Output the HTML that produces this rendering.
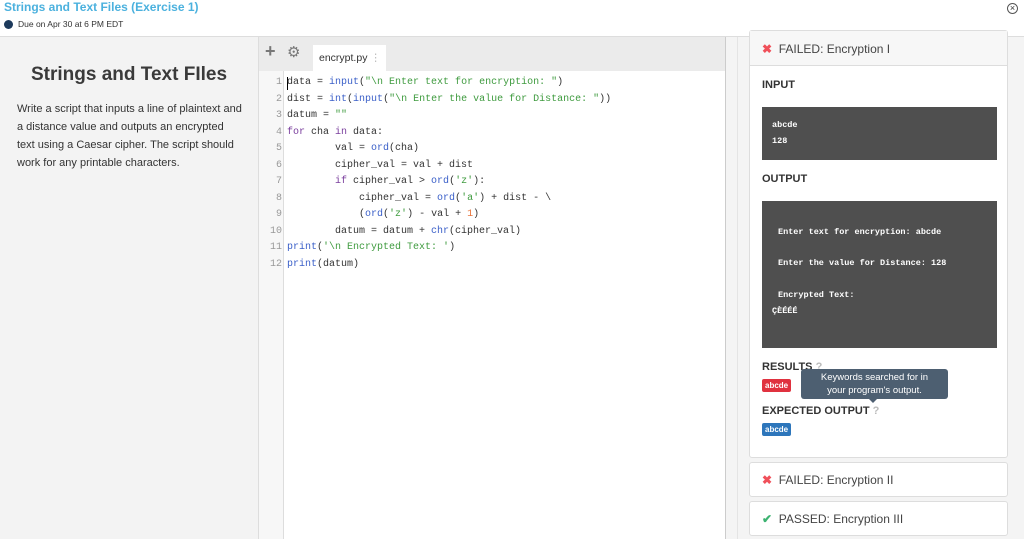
<!DOCTYPE html>
<html><head><style>
*{margin:0;padding:0;box-sizing:border-box}
body{width:1024px;height:539px;overflow:hidden;background:#fff;font-family:"Liberation Sans",sans-serif;position:relative;color:#333}
.abs{position:absolute}
.code{font-family:"Liberation Mono",monospace;font-size:10px;color:#333;white-space:pre;line-height:16.5px}
.k{color:#7a3e9d}.f{color:#3a5fc8}.s{color:#3f9b3f}.n{color:#e8743b}
.card{position:absolute;left:749px;width:259px;background:#fff;border:1px solid #ddd;border-radius:3px}
.lbl{position:absolute;left:12px;font-size:11px;font-weight:bold;color:#333}
.dark{position:absolute;left:12px;width:235px;background:#4f4f4f;color:#fff;font-family:"Liberation Mono",monospace;font-size:8.5px;font-weight:bold;white-space:pre}
.badge{position:absolute;font-size:8px;font-weight:bold;color:#fff;padding:2px 3px;border-radius:2px}
.hdr{position:absolute;left:12px;font-size:12px;color:#444}
</style></head><body>
<div class="abs" style="left:4px;top:0px;font-size:12px;font-weight:bold;color:#4bb1de">Strings and Text Files (Exercise 1)</div>
<div class="abs" style="left:4px;top:20px;width:9px;height:9px;border-radius:50%;background:#1d3a5c"></div>
<div class="abs" style="left:18px;top:19px;font-size:8.5px;color:#333">Due on Apr 30 at 6 PM EDT</div>
<div class="abs" style="right:6px;top:3px;width:11px;height:11px;border:1px solid #555;border-radius:50%;font-size:9px;line-height:9px;text-align:center">×</div>
<div class="abs" style="left:0;top:36px;width:1024px;height:1px;background:#ddd"></div>

<div class="abs" style="left:0;top:37px;width:258px;height:502px;background:#f3f3f3"></div>
<div class="abs" style="left:0;top:64px;width:258px;text-align:center;font-size:19px;font-weight:bold;color:#3a3a3a">Strings and Text FIles</div>
<div class="abs" style="left:17px;top:100px;width:226px;font-size:11px;line-height:18px;color:#333">Write a script that inputs a line of plaintext and a distance value and outputs an encrypted text using a Caesar cipher. The script should work for any printable characters.</div>

<div class="abs" style="left:258px;top:37px;width:468px;height:502px;background:#fff;border-left:1px solid #ddd;border-right:1px solid #ccc"></div>
<div class="abs" style="left:259px;top:37px;width:466px;height:34px;background:#ebebeb"></div>
<div class="abs" style="left:265px;top:41px;font-size:18px;font-weight:bold;color:#777">+</div>
<div class="abs" style="left:287px;top:43px;font-size:15px;color:#777">⚙</div>
<div class="abs" style="left:313px;top:45px;width:73px;height:26px;background:#fff"></div>
<div class="abs" style="left:319px;top:52px;font-size:10.5px;color:#333">encrypt.py <span style="color:#bbb">⋮</span></div>
<div class="abs" style="left:259px;top:71px;width:25px;height:468px;background:#f7f7f7;border-right:1px solid #ddd"></div>
<div class="abs code" style="left:260px;top:75px;width:22px;text-align:right;color:#999">1
2
3
4
5
6
7
8
9
10
11
12</div>
<div class="abs" style="left:287px;top:77px;width:1px;height:13px;background:#000"></div>
<div class="abs code" style="left:287px;top:75px">data = <span class="f">input</span>(<span class="s">"\n Enter text for encryption: "</span>)
dist = <span class="f">int</span>(<span class="f">input</span>(<span class="s">"\n Enter the value for Distance: "</span>))
datum = <span class="s">""</span>
<span class="k">for</span> cha <span class="k">in</span> data:
        val = <span class="f">ord</span>(cha)
        cipher_val = val + dist
        <span class="k">if</span> cipher_val > <span class="f">ord</span>(<span class="s">'z'</span>):
            cipher_val = <span class="f">ord</span>(<span class="s">'a'</span>) + dist - \
            (<span class="f">ord</span>(<span class="s">'z'</span>) - val + <span class="n">1</span>)
        datum = datum + <span class="f">chr</span>(cipher_val)
<span class="f">print</span>(<span class="s">'\n Encrypted Text: '</span>)
<span class="f">print</span>(datum)</div>

<div class="abs" style="left:726px;top:37px;width:298px;height:502px;background:#f4f4f4"></div>
<div class="abs" style="left:737px;top:37px;width:1px;height:502px;background:#e4e4e4"></div>

<div class="card" style="top:30px;height:428px">
 <div class="abs" style="left:0;top:0;width:257px;height:35px;background:#f7f7f7;border-bottom:1px solid #ddd"></div>
 <div class="hdr" style="top:11px"><span style="color:#f0505a;font-weight:bold">✖</span>&nbsp; FAILED: Encryption I</div>
 <div class="lbl" style="top:48px">INPUT</div>
 <div class="dark" style="top:76px;height:53px;padding:10px 10px;line-height:16px">abcde
128</div>
 <div class="lbl" style="top:142px">OUTPUT</div>
 <div class="dark" style="top:170px;height:147px;padding:24px 16px;line-height:15.7px"><span>Enter text for encryption: abcde</span>

Enter the value for Distance: 128

Encrypted Text:
<span style="margin-left:-6px">ÇÈÉÉÉ</span></div>
 <div class="lbl" style="top:330px">RESULTS <span style="color:#bbb">?</span></div>
 <div class="badge" style="left:12px;top:348px;background:#e0323f">abcde</div>
 <div class="abs" style="left:51px;top:338px;width:147px;height:30px;background:#4d5f71;border-radius:3px;color:#fff;font-size:9.5px;text-align:center;line-height:13px;padding-top:2px">Keywords searched for in<br>your program's output.</div>
 <div class="abs" style="left:119px;top:368px;border:4px solid transparent;border-top-color:#4d5f71"></div>
 <div class="lbl" style="top:374px">EXPECTED OUTPUT <span style="color:#bbb">?</span></div>
 <div class="badge" style="left:12px;top:392px;background:#2d76bb">abcde</div>
</div>
<div class="card" style="top:462px;height:35px"><div class="hdr" style="top:10px"><span style="color:#f0505a;font-weight:bold">✖</span>&nbsp; FAILED: Encryption II</div></div>
<div class="card" style="top:501px;height:35px"><div class="hdr" style="top:10px"><span style="color:#3cb371;font-weight:bold">✔</span>&nbsp; PASSED: Encryption III</div></div>
</body></html>
